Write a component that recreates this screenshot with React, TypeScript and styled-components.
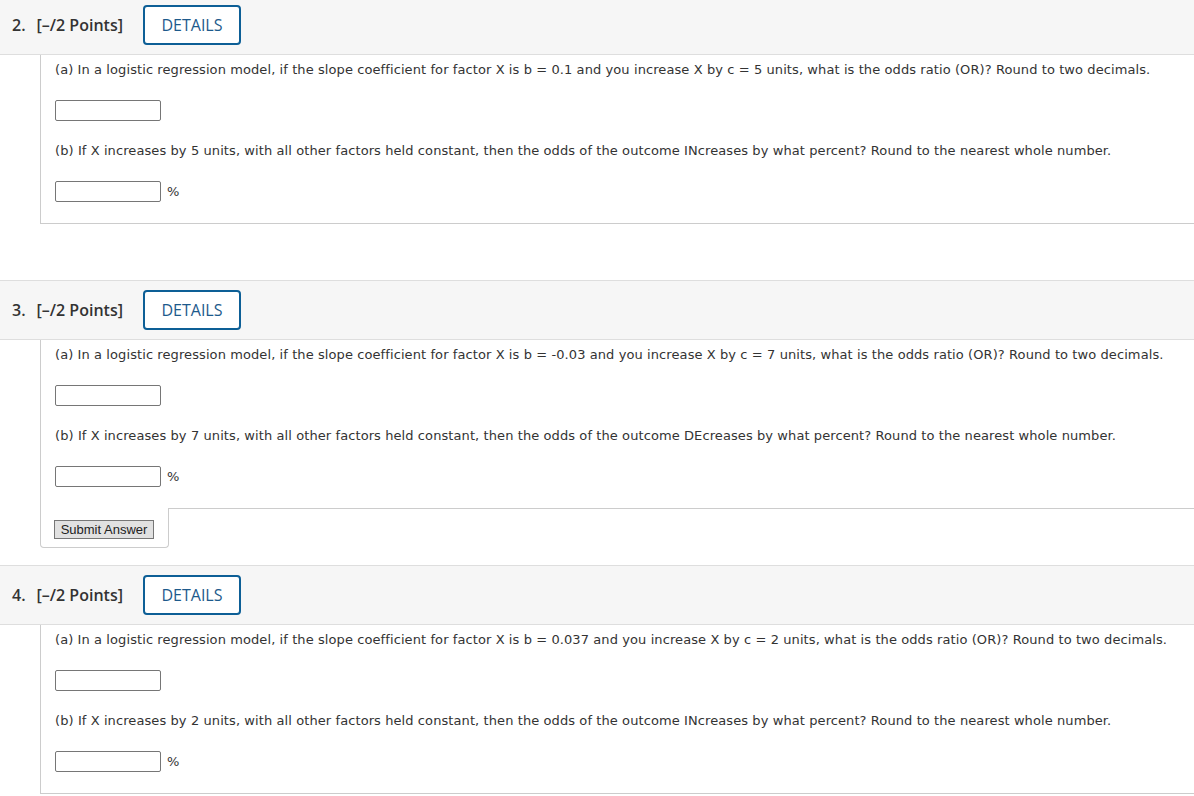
import * as React from 'react';
import styled, { createGlobalStyle } from 'styled-components';

interface Question {
  num: number;
  b: string;
  c: number;
  direction: string;
  submit?: boolean;
}

const questions: Question[] = [
  { num: 2, b: '0.1', c: 5, direction: 'INcreases' },
  { num: 3, b: '-0.03', c: 7, direction: 'DEcreases', submit: true },
  { num: 4, b: '0.037', c: 2, direction: 'INcreases' },
];

const GlobalStyle = createGlobalStyle`
  html, body {
    margin: 0;
    padding: 0;
    background: #ffffff;
    overflow: hidden;
  }
`;

const Page = styled.div`
  margin-top: -5px;
`;

const Section = styled.section<{ $gap: number }>`
  margin-bottom: ${(p) => p.$gap}px;
`;

const Header = styled.div`
  display: flex;
  align-items: center;
  padding: 9px 12px;
  background: #f6f6f6;
  border-top: 1px solid #dedede;
  border-bottom: 1px solid #dedede;
`;

const PointsLabel = styled.h3`
  margin: 0 20px 0 0;
  font-family: 'Open Sans', sans-serif;
  font-size: 16px;
  font-weight: 600;
  color: #333333;
`;

const Number = styled.span`
  margin-right: 11px;
`;

const DetailsButton = styled.button`
  box-sizing: border-box;
  width: 98px;
  height: 40px;
  border: 2px solid #0d5f96;
  border-radius: 4px;
  background: #ffffff;
  font-family: 'Open Sans', sans-serif;
  font-size: 16px;
  color: #1d5a8c;
  padding: 0;
`;

const Body = styled.div<{ $open: boolean }>`
  display: flex;
  flex-direction: column;
  align-items: flex-start;
  gap: 20px;
  margin-left: 40px;
  padding: 5px 0 21px 14px;
  border-left: 1px solid #cccccc;
  border-bottom: ${(p) => (p.$open ? 'none' : '1px solid #cccccc')};
`;

const Prompt = styled.p`
  margin: 0;
  font-family: 'DejaVu Sans', Verdana, sans-serif;
  font-size: 13px;
  line-height: 20px;
  letter-spacing: 0.09px;
  color: #333333;
  white-space: nowrap;
`;

const AnswerRow = styled.div`
  display: flex;
  align-items: center;
`;

const AnswerInput = styled.input`
  box-sizing: border-box;
  width: 106px;
  height: 21px;
  border: 1px solid #767676;
  border-radius: 2px;
  padding: 0 2px;
  background: #ffffff;
`;

const Unit = styled.span`
  margin-left: 6px;
  font-family: 'DejaVu Sans', Verdana, sans-serif;
  font-size: 13px;
  color: #333333;
`;

const SubmitRow = styled.div`
  display: flex;
  margin-left: 40px;
`;

const SubmitTab = styled.div`
  box-sizing: border-box;
  width: 129px;
  padding: 12px 0 8px 13px;
  border: 1px solid #cccccc;
  border-top: none;
  border-radius: 0 0 4px 4px;
`;

const Filler = styled.div`
  flex: 1;
  border-top: 1px solid #cccccc;
`;

const SubmitButton = styled.button`
  box-sizing: border-box;
  display: block;
  width: 100px;
  height: 19px;
  padding: 0;
  border: 1px solid #767676;
  background: #e1e1e1;
  font-family: 'Liberation Sans', Arial, sans-serif;
  font-size: 13px;
  color: #222222;
`;

const QuestionBlock = ({ q, gap }: { q: Question; gap: number }) => (
  <Section $gap={gap}>
    <Header>
      <PointsLabel>
        <Number>{q.num}.</Number>[–/2 Points]
      </PointsLabel>
      <DetailsButton>DETAILS</DetailsButton>
    </Header>
    <Body $open={!!q.submit}>
      <Prompt>
        (a) In a logistic regression model, if the slope coefficient for factor X is b = {q.b} and you
        increase X by c = {q.c} units, what is the odds ratio (OR)? Round to two decimals.
      </Prompt>
      <AnswerInput type="text" />
      <Prompt>
        (b) If X increases by {q.c} units, with all other factors held constant, then the odds of the
        outcome {q.direction} by what percent? Round to the nearest whole number.
      </Prompt>
      <AnswerRow>
        <AnswerInput type="text" />
        <Unit>%</Unit>
      </AnswerRow>
    </Body>
    {q.submit && (
      <SubmitRow>
        <SubmitTab>
          <SubmitButton>Submit Answer</SubmitButton>
        </SubmitTab>
        <Filler />
      </SubmitRow>
    )}
  </Section>
);

export default function App() {
  const gaps = [56, 17, 0];
  return (
    <Page>
      <GlobalStyle />
      {questions.map((q, i) => (
        <QuestionBlock key={q.num} q={q} gap={gaps[i]} />
      ))}
    </Page>
  );
}
